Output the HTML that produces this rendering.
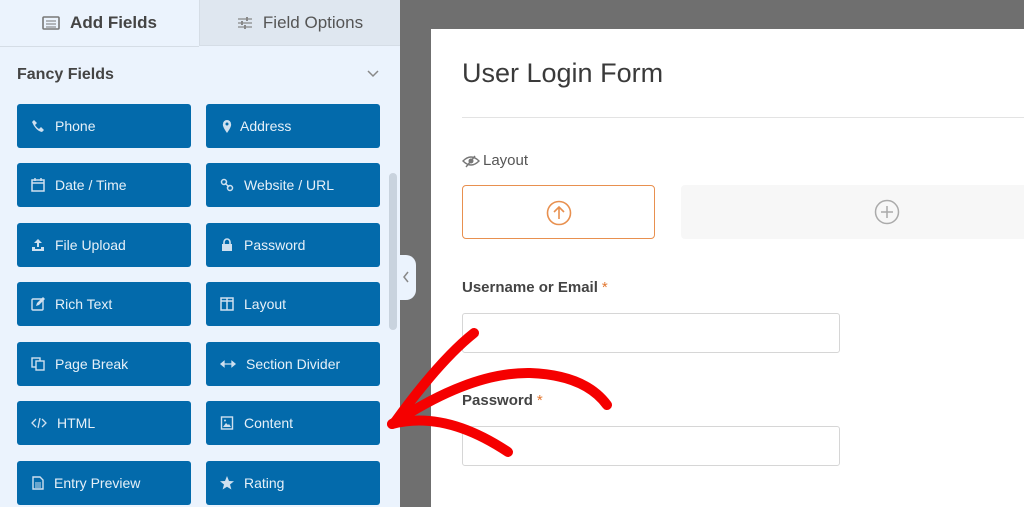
<!DOCTYPE html>
<html><head><meta charset="utf-8"><style>
*{margin:0;padding:0;box-sizing:border-box}
html,body{width:1024px;height:507px;overflow:hidden}
body{background:#6f6f6f;font-family:"Liberation Sans",sans-serif;position:relative}
.side{position:absolute;left:0;top:0;width:400px;height:507px;background:#ebf3fd}
.tab1{position:absolute;left:0;top:0;width:199px;height:46px;background:#ebf3fd;font-size:17px;color:#444;display:flex;align-items:center;justify-content:center;gap:10px;font-weight:bold}
.tab2{position:absolute;left:199px;top:0;width:201px;height:46px;background:#dfe7f0;border-left:1px solid #d5dde6;border-bottom:1px solid #d5dde6;font-size:17px;color:#555;display:flex;align-items:center;justify-content:center;gap:10px}
.line{position:absolute;left:0;top:46px;width:199px;height:1px;background:#d5dde6}
.ff{position:absolute;left:17px;top:66px;font-size:16px;font-weight:bold;color:#444}
.chev{position:absolute;left:366px;top:69px}
.b{position:absolute;width:174px;height:44px;background:#036aab;border-radius:3px;color:#e6f0f8;font-size:14px;display:flex;align-items:center}
.b svg{position:absolute;left:14px;top:15px}
.b span{position:absolute;left:38px}
.sb{position:absolute;left:389px;top:173px;width:8px;height:157px;background:#c9d3de;border-radius:4px}
.col{position:absolute;left:400px;top:255px;width:16px;height:45px;background:#ebf3fd;border-radius:0 10px 10px 0}
.card{position:absolute;left:431px;top:29px;width:600px;height:480px;background:#fff}
h1{position:absolute;left:462px;top:58px;font-size:27px;font-weight:normal;color:#3a3a3a}
.hr{position:absolute;left:462px;top:117px;width:570px;height:1px;background:#e3e3e3}
.lay{position:absolute;left:483px;top:152px;font-size:15px;color:#555}
.box1{position:absolute;left:462px;top:185px;width:193px;height:54px;border:1px solid #e8904f;border-radius:4px}
.box2{position:absolute;left:681px;top:185px;width:350px;height:54px;background:#f7f7f7;border-radius:4px}
.lbl{position:absolute;left:462px;font-size:15px;font-weight:bold;color:#444}
.lbl i{color:#e27730;font-style:normal;font-weight:normal;margin-left:4px}
.in{position:absolute;left:462px;width:378px;height:40px;border:1px solid #d6d6d6;border-radius:3px;background:#fff}
</style></head><body>
<div class="side">
<div class="tab1"><svg width="18" height="14"><rect x="1" y="1" width="16" height="12" rx="1" fill="none" stroke="#777" stroke-width="1.6"/><path d="M4 5h10M4 8h10M4 11h10" stroke="#777"/></svg>Add Fields</div>
<div class="tab2"><svg width="16" height="14"><path d="M1 3h14M1 7h14M1 11h14" stroke="#888" stroke-width="1.3"/><rect x="9" y="1" width="2" height="4" fill="#888"/><rect x="4" y="5" width="2" height="4" fill="#888"/><rect x="7" y="9" width="2" height="4" fill="#888"/></svg>Field Options</div>
<div class="line"></div>
<div class="ff">Fancy Fields</div>
<svg class="chev" width="14" height="10"><path d="M2 2l5 5 5-5" fill="none" stroke="#888" stroke-width="1.5"/></svg>
<div class="sb"></div>
</div>
<div class="col"><svg width="16" height="45"><path d="M8 17l-4 5 4 5" fill="none" stroke="#888" stroke-width="1.5"/></svg></div>

<div class="b" style="left:17px;top:104px"><svg width="14" height="14"><path d="M3 1l3 3-2 2q2 3 4 4l2-2 3 3-2 2Q5 12 1 3z" fill="#cfe0ef"/></svg><span>Phone</span></div>
<div class="b" style="left:206px;top:104px"><svg width="14" height="14"><path d="M7 14Q2 7 3 5a4 4 0 018 0q1 2-4 9z" fill="#cfe0ef"/><circle cx="7" cy="5" r="1.5" fill="#036aab"/></svg><span style="left:34px">Address</span></div>
<div class="b" style="left:17px;top:163px"><svg width="14" height="14"><rect x="1" y="2" width="12" height="11" fill="none" stroke="#cfe0ef" stroke-width="1.5"/><path d="M1 5h12M4 0v3M10 0v3" stroke="#cfe0ef" stroke-width="1.5"/></svg><span>Date / Time</span></div>
<div class="b" style="left:206px;top:163px"><svg width="14" height="14"><circle cx="4" cy="4" r="2.5" fill="none" stroke="#cfe0ef" stroke-width="1.5"/><circle cx="10" cy="10" r="2.5" fill="none" stroke="#cfe0ef" stroke-width="1.5"/><path d="M5 5l4 4" stroke="#cfe0ef" stroke-width="1.5"/></svg><span>Website / URL</span></div>
<div class="b" style="left:17px;top:223px"><svg width="14" height="14"><path d="M7 1l4 4H8v4H6V5H3z M1 9h3v2h6V9h3v4H1z" fill="#cfe0ef"/></svg><span>File Upload</span></div>
<div class="b" style="left:206px;top:223px"><svg width="14" height="14"><rect x="2" y="6" width="10" height="7" fill="#cfe0ef"/><path d="M4 6V4a3 3 0 016 0v2" fill="none" stroke="#cfe0ef" stroke-width="1.6"/></svg><span>Password</span></div>
<div class="b" style="left:17px;top:282px"><svg width="14" height="14"><rect x="1" y="2" width="11" height="11" rx="1" fill="none" stroke="#cfe0ef" stroke-width="1.4"/><path d="M5 9l1-3 6-6 2 2-6 6z" fill="#cfe0ef"/></svg><span>Rich Text</span></div>
<div class="b" style="left:206px;top:282px"><svg width="14" height="14"><rect x="1" y="1" width="12" height="12" fill="none" stroke="#cfe0ef" stroke-width="1.5"/><path d="M7 1v12M1 4h12" stroke="#cfe0ef" stroke-width="1.5"/></svg><span>Layout</span></div>
<div class="b" style="left:17px;top:342px"><svg width="14" height="14"><rect x="1" y="1" width="8" height="9" fill="none" stroke="#cfe0ef" stroke-width="1.4"/><rect x="5" y="4" width="8" height="9" fill="#036aab" stroke="#cfe0ef" stroke-width="1.4"/></svg><span>Page Break</span></div>
<div class="b" style="left:206px;top:342px"><svg width="16" height="14"><path d="M1 7h14M1 7l3-2.5v5zM15 7l-3-2.5v5z" stroke="#cfe0ef" fill="#cfe0ef" stroke-width="1.3"/></svg><span style="left:40px">Section Divider</span></div>
<div class="b" style="left:17px;top:401px"><svg width="16" height="14"><path d="M5 3L1 7l4 4M11 3l4 4-4 4M9 2L7 12" fill="none" stroke="#cfe0ef" stroke-width="1.3"/></svg><span style="left:40px">HTML</span></div>
<div class="b" style="left:206px;top:401px"><svg width="14" height="14"><rect x="1.5" y="1" width="11" height="12" fill="none" stroke="#cfe0ef" stroke-width="1.4"/><path d="M3 11l3-4 2 2 1-1 2 3z" fill="#cfe0ef"/><circle cx="5" cy="4.5" r="1" fill="#cfe0ef"/></svg><span>Content</span></div>
<div class="b" style="left:17px;top:461px"><svg width="14" height="14"><path d="M2 1h7l3 3v9H2z" fill="none" stroke="#cfe0ef" stroke-width="1.4"/><path d="M4 7h6M4 9h6M4 11h6" stroke="#cfe0ef"/></svg><span style="left:37px">Entry Preview</span></div>
<div class="b" style="left:206px;top:461px"><svg width="14" height="14"><path d="M7 0l2 5 5 .3-4 3.2 1.4 5L7 10.8 2.6 13.5 4 8.5 0 5.3 5 5z" fill="#cfe0ef"/></svg><span>Rating</span></div>

<div class="card"></div>
<h1>User Login Form</h1>
<div class="hr"></div>
<svg style="position:absolute;left:462px;top:155px" width="18" height="13"><path d="M1 6q8-8 16 0q-8 8-16 0z" fill="none" stroke="#777" stroke-width="1.4"/><circle cx="9" cy="6" r="2.5" fill="#777"/><path d="M4 12L13 1" stroke="#777" stroke-width="1.4"/></svg>
<div class="lay">Layout</div>
<div class="box1"><svg style="position:absolute;left:83px;top:14px" width="26" height="26"><circle cx="13" cy="13" r="11.5" fill="none" stroke="#e8904f" stroke-width="1.6"/><path d="M13 19V7M8 12l5-5 5 5" fill="none" stroke="#e8904f" stroke-width="1.6"/></svg></div>
<div class="box2"><svg style="position:absolute;left:193px;top:14px" width="26" height="26"><circle cx="13" cy="13" r="11.5" fill="none" stroke="#aaa" stroke-width="1.5"/><path d="M13 7v12M7 13h12" stroke="#aaa" stroke-width="1.5"/></svg></div>
<div class="lbl" style="top:279px">Username or Email<i>*</i></div>
<div class="in" style="top:313px"></div>
<div class="lbl" style="top:392px">Password<i>*</i></div>
<div class="in" style="top:426px"></div>

<svg style="position:absolute;left:0;top:0" width="1024" height="507">
<g fill="none" stroke="#f50000" stroke-width="10" stroke-linecap="round" stroke-linejoin="round">
<path d="M607 405Q585 375 530 373Q470 372 392 424"/>
<path d="M474 333Q440 360 395 422"/>
<path d="M392 424Q445 410 508 452"/>
</g>
</svg>
</body></html>
